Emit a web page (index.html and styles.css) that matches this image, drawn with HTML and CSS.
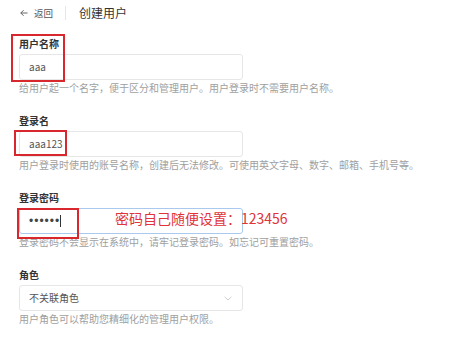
FILE: index.html
```html
<!DOCTYPE html>
<html lang="zh">
<head>
<meta charset="utf-8">
<link rel="stylesheet" href="styles.css">
</head>
<body>
<div class="page">
  <div class="header">
    <a class="back">
      <svg class="back-icon" width="8" height="8" viewBox="0 0 8 8"><path d="M7.5 4H0.8M3.6 1.2L0.8 4l2.8 2.8" fill="none" stroke="#555" stroke-width="0.9"/></svg>
      <span>返回</span>
    </a>
    <span class="divider"></span>
    <h1 class="title">创建用户</h1>
  </div>

  <div class="field">
    <div class="label">用户名称</div>
    <div class="input"><span class="value">aaa</span></div>
    <div class="help">给用户起一个名字，便于区分和管理用户。用户登录时不需要用户名称。</div>
    <div class="mark mark-1"></div>
  </div>

  <div class="field">
    <div class="label">登录名</div>
    <div class="input"><span class="value">aaa123</span></div>
    <div class="help">用户登录时使用的账号名称，创建后无法修改。可使用英文字母、数字、邮箱、手机号等。</div>
    <div class="mark mark-2"></div>
  </div>

  <div class="field">
    <div class="label">登录密码</div>
    <div class="input input-focus"><span class="dots">••••••</span><span class="caret"></span></div>
    <div class="help">登录密码不会显示在系统中，请牢记登录密码。如忘记可重置密码。</div>
    <div class="mark mark-3"></div>
    <div class="note">密码自己随便设置：123456</div>
  </div>

  <div class="field">
    <div class="label">角色</div>
    <div class="input select"><span class="value">不关联角色</span>
      <svg class="chev" width="8" height="5" viewBox="0 0 8 5"><path d="M0.6 0.8L4 4l3.4-3.2" fill="none" stroke="#c8c8c8" stroke-width="0.9"/></svg>
    </div>
    <div class="help">用户角色可以帮助您精细化的管理用户权限。</div>
  </div>
</div>
</body>
</html>
```

FILE: styles.css
```css
* { box-sizing: border-box; }
html, body { margin: 0; padding: 0; background: #fff; }
body {
  font-family: "Noto Sans CJK SC", "Noto Sans", "Liberation Sans", sans-serif;
  color: #333;
}
.page {
  width: 474px;
  height: 348px;
  padding: 0 0 0 19px;
  overflow: hidden;
}
.header {
  height: 26px;
  display: flex;
  align-items: center;
  margin-left: 1px;
}
.back {
  display: flex;
  align-items: center;
  gap: 6px;
  font-size: 9.5px;
  color: #555;
}
.back-icon { display: block; }
.divider {
  width: 1px;
  height: 14px;
  background: #e6e6e6;
  margin: 0 13px 0 12px;
}
.title {
  margin: 0;
  font-size: 12px;
  font-weight: 400;
  color: #333;
  line-height: 16px;
}
.field {
  position: relative;
  width: 224px;
  margin-top: 19px;
}
.field:first-of-type { margin-top: 11px; }
.header + .field { margin-top: 11px; }
.label {
  font-size: 10px;
  line-height: 14px;
  font-weight: 700;
  color: #333;
}
.input {
  margin-top: 3px;
  height: 26px;
  border: 1px solid #e6e6e6;
  border-radius: 3px;
  display: flex;
  align-items: center;
  padding-left: 9px;
  font-size: 10px;
  color: #555;
  position: relative;
}
.input-focus { border-color: #a9c9ee; }
.value { line-height: 14px; }
.dots {
  font-family: "Liberation Sans", sans-serif;
  font-size: 12px;
  letter-spacing: 1px;
  color: #444;
  line-height: 14px;
}
.caret {
  width: 1px;
  height: 12px;
  background: #333;
  margin-left: 0px;
}
.select { justify-content: space-between; padding-right: 10px; }
.chev { display: block; }
.help {
  margin-top: 1px;
  font-size: 10px;
  line-height: 14px;
  color: #a0a0a0;
  white-space: nowrap;
}
.mark {
  position: absolute;
  border: 2px solid #d8282e;
}
.mark-1 { left: -8px; top: -3px; width: 54px; height: 48px; }
.mark-2 { left: -5px; top: 16px; width: 53px; height: 26px; }
.mark-3 { left: -2px; top: 17px; width: 62px; height: 31px; }
.note {
  position: absolute;
  left: 96px;
  top: 19px;
  font-size: 14px;
  line-height: 16px;
  color: #e0333a;
  white-space: nowrap;
}
```
